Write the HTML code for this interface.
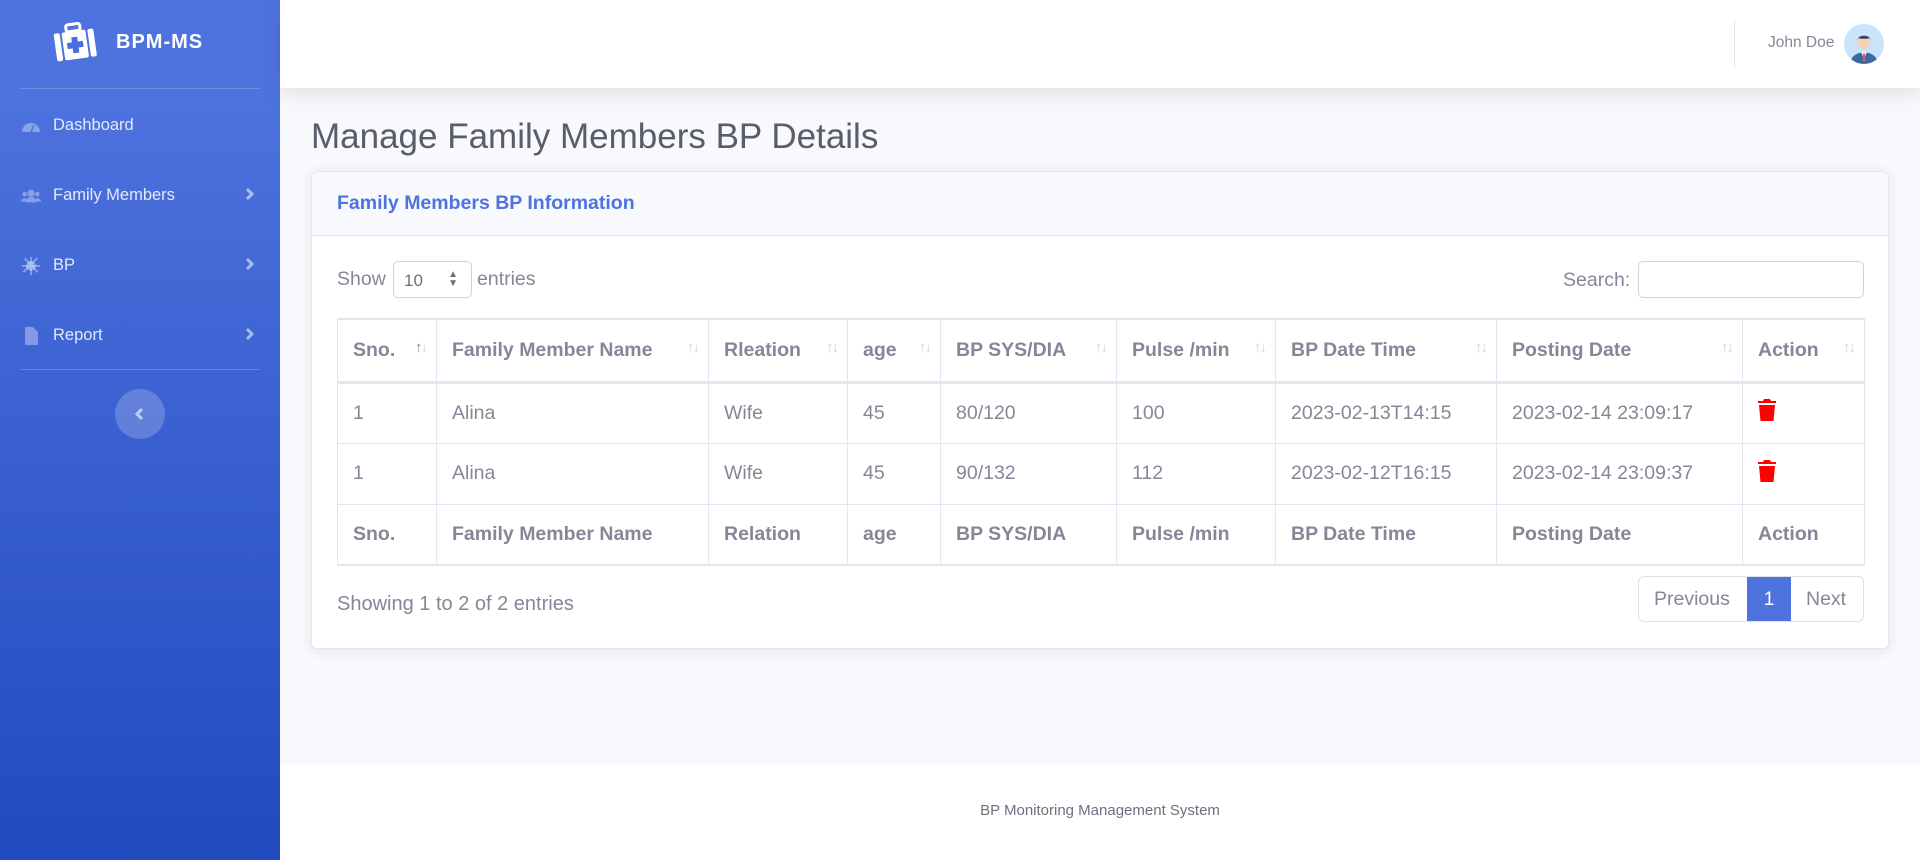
<!DOCTYPE html>
<html><head><meta charset="utf-8"><style>
*{box-sizing:border-box;margin:0;padding:0}
body{width:1920px;height:860px;overflow:hidden;background:#f8f9fc;font-family:"Liberation Sans",sans-serif;color:#858796;position:relative}
.sb{position:absolute;left:0;top:0;width:280px;height:860px;background:linear-gradient(180deg,#4e73df 10%,#224abe 100%)}
.brand{position:absolute;left:116px;top:31px;color:#fff;font-weight:bold;font-size:20px;letter-spacing:1px}
.hr{position:absolute;left:20px;width:240px;height:1px;background:rgba(255,255,255,.2)}
.item{position:absolute;left:21px;color:rgba(255,255,255,.85);font-size:16.5px;display:flex;align-items:center}
.item .ic{width:20px;height:18px;margin-right:12px;display:inline-block}
.chev{position:absolute;left:245px}
.tog{position:absolute;left:115px;top:389px;width:50px;height:50px;border-radius:50%;background:rgba(255,255,255,.2)}
.top{position:absolute;left:280px;top:0;width:1640px;height:88px;background:#fff;box-shadow:0 4px 20px rgba(58,59,69,.15)}
.vd{position:absolute;left:1454px;top:20px;width:1px;height:48px;background:#e3e6f0}
.jd{position:absolute;left:1488px;top:34px;font-size:15.5px;color:#858796}
.av{position:absolute;left:1564px;top:24px;width:40px;height:40px;border-radius:50%;background:#c9e3fb;overflow:hidden}
h1{position:absolute;left:311px;top:117px;font-weight:normal;font-size:35px;color:#5a5c69}
.card{position:absolute;left:311px;top:171px;width:1578px;height:478px;background:#fff;border:1px solid #e3e6f0;border-radius:6px;box-shadow:0 2px 12px rgba(58,59,69,.1)}
.ch{height:64px;background:#f8f9fc;border-bottom:1px solid #e3e6f0;border-radius:6px 6px 0 0;padding:20px 25px;color:#4e73df;font-weight:bold;font-size:19.5px}
.t{font-size:19.5px}
table{position:absolute;left:337px;top:318px;border-collapse:collapse;table-layout:fixed;width:1527px;font-size:19.5px}
td,th{border:1px solid #e3e6f0;padding:0 15px;text-align:left;white-space:nowrap;overflow:hidden}
th{font-weight:bold;color:#858796;position:relative}
thead th{height:63px;border-bottom:3px solid #e3e6f0;border-top:2px solid #e3e6f0}
tbody td{height:61px}
tfoot th{height:61px;border-bottom:2px solid #e3e6f0}
.ar{position:absolute;right:10px;top:19px;color:#d1d3e2;font-size:15px;font-weight:normal;letter-spacing:-2px}
.pg{position:absolute;left:1638px;top:576px;width:226px;height:46px;display:flex;border:1px solid #dddfeb;border-radius:6px;overflow:hidden;font-size:19.5px}
.pg div{padding:0 15px;line-height:44px}
.foot{position:absolute;left:280px;top:764px;width:1640px;height:96px;background:#fff;text-align:center;padding-top:38px;font-size:15px;color:#6e707e}
</style></head><body>
<div class="sb">
<svg style="position:absolute;left:53px;top:22px" width="44" height="42" viewBox="0 0 44 42"><g fill="#fff" transform="rotate(-8 22 21)"><rect x="15" y="2" width="14" height="7" rx="2" fill="none" stroke="#fff" stroke-width="3"/><rect x="2" y="9" width="6" height="28" rx="2"/><rect x="36" y="9" width="6" height="28" rx="2"/><rect x="10" y="9" width="24" height="28" rx="2"/><path d="M19 15h6v5h5v6h-5v5h-6v-5h-5v-6h5z" fill="#4a6ddb"/></g></svg>
<div class="brand">BPM-MS</div>
<div class="hr" style="top:88px"></div>
<div class="item" style="top:116px"><svg class="ic" viewBox="0 0 20 18"><path d="M1 15a9 9 0 0 1 18 0z" fill="rgba(255,255,255,.35)"/><path d="M10 15l3-7" stroke="#4e73df" stroke-width="1.5"/></svg>Dashboard</div>
<div class="item" style="top:186px"><svg class="ic" viewBox="0 0 22 18"><g fill="rgba(255,255,255,.35)"><circle cx="11" cy="6" r="4"/><circle cx="4" cy="7" r="2.5"/><circle cx="18" cy="7" r="2.5"/><path d="M5 16a6 6 0 0 1 12 0zM0 15a4 4 0 0 1 6-3l-1 3zM22 15a4 4 0 0 0-6-3l1 3z"/></g></svg>Family Members</div>
<svg class="chev" style="top:187px" width="10" height="14" viewBox="0 0 10 14"><path d="M2 2l5 5-5 5" fill="none" stroke="rgba(255,255,255,.55)" stroke-width="3"/></svg>
<div class="item" style="top:256px"><svg class="ic" viewBox="0 0 20 18"><g fill="rgba(255,255,255,.35)"><circle cx="10" cy="9" r="5"/><path d="M9 0h2v18H9zM1 8h18v2H1zM3 2l1.5-1.5 13 14L16 16zM17 2l-14 14-1.5-1.5 14-14z"/></g></svg>BP</div>
<svg class="chev" style="top:257px" width="10" height="14" viewBox="0 0 10 14"><path d="M2 2l5 5-5 5" fill="none" stroke="rgba(255,255,255,.55)" stroke-width="3"/></svg>
<div class="item" style="top:326px"><svg class="ic" viewBox="0 0 20 18"><path d="M4 0h8l5 5v13H4z" fill="rgba(255,255,255,.35)"/></svg>Report</div>
<svg class="chev" style="top:327px" width="10" height="14" viewBox="0 0 10 14"><path d="M2 2l5 5-5 5" fill="none" stroke="rgba(255,255,255,.55)" stroke-width="3"/></svg>
<div class="hr" style="top:369px"></div>
<div class="tog"><svg style="position:absolute;left:20px;top:18px" width="10" height="14" viewBox="0 0 10 14"><path d="M7 2L2 7l5 5" fill="none" stroke="rgba(255,255,255,.6)" stroke-width="3"/></svg></div>
</div>
<div class="top"><div class="vd"></div><div class="jd">John Doe</div>
<div class="av"><svg width="40" height="40" viewBox="0 0 40 40"><path d="M6 40c1-8 6-11 14-12 8 1 13 4 14 12z" fill="#3b6aa0"/><path d="M17 28h6l-3 6z" fill="#fff"/><path d="M19.3 29h1.4l.6 8h-2.6z" fill="#e05a5a"/><ellipse cx="20" cy="18" rx="6" ry="7" fill="#f6d2b8"/><path d="M13 17c0-7 14-7 14 0l-1-3c-3 1-9 1-12 0z" fill="#2d3e55"/></svg></div>
</div>
<h1>Manage Family Members BP Details</h1>
<div class="card"><div class="ch">Family Members BP Information</div></div>
<div class="t" style="position:absolute;left:337px;top:268px">Show</div>
<div style="position:absolute;left:393px;top:261px;width:79px;height:37px;border:1px solid #d1d3e2;border-radius:5px;font-size:17px;padding:9px 10px;color:#6e707e">10<span style="position:absolute;right:13px;top:8px;font-size:10px;line-height:9px">▲<br>▼</span></div>
<div class="t" style="position:absolute;left:477px;top:268px">entries</div>
<div class="t" style="position:absolute;left:1563px;top:269px">Search:</div>
<div style="position:absolute;left:1638px;top:261px;width:226px;height:37px;border:1px solid #d1d3e2;border-radius:5px"></div>
<table>
<colgroup><col style="width:99px"><col style="width:272px"><col style="width:139px"><col style="width:93px"><col style="width:176px"><col style="width:159px"><col style="width:221px"><col style="width:246px"><col style="width:122px"></colgroup>
<thead><tr><th>Sno.<span class="ar" style="color:#858796">↑<span style="color:#d1d3e2">↓</span></span></th><th>Family Member Name<span class="ar">↑↓</span></th><th>Rleation<span class="ar">↑↓</span></th><th>age<span class="ar">↑↓</span></th><th>BP SYS/DIA<span class="ar">↑↓</span></th><th>Pulse /min<span class="ar">↑↓</span></th><th>BP Date Time<span class="ar">↑↓</span></th><th>Posting Date<span class="ar">↑↓</span></th><th>Action<span class="ar">↑↓</span></th></tr></thead>
<tbody>
<tr><td>1</td><td>Alina</td><td>Wife</td><td>45</td><td>80/120</td><td>100</td><td>2023-02-13T14:15</td><td>2023-02-14 23:09:17</td><td><svg width="18" height="22" viewBox="0 0 18 22"><path d="M6 0h6l1 2h5v2H0V2h5zM1 6h16l-1.5 16h-13z" fill="#f00"/></svg></td></tr>
<tr><td>1</td><td>Alina</td><td>Wife</td><td>45</td><td>90/132</td><td>112</td><td>2023-02-12T16:15</td><td>2023-02-14 23:09:37</td><td><svg width="18" height="22" viewBox="0 0 18 22"><path d="M6 0h6l1 2h5v2H0V2h5zM1 6h16l-1.5 16h-13z" fill="#f00"/></svg></td></tr>
</tbody>
<tfoot><tr><th>Sno.</th><th>Family Member Name</th><th>Relation</th><th>age</th><th>BP SYS/DIA</th><th>Pulse /min</th><th>BP Date Time</th><th>Posting Date</th><th>Action</th></tr></tfoot>
</table>
<div class="t" style="position:absolute;left:337px;top:593px;font-size:20px">Showing 1 to 2 of 2 entries</div>
<div class="pg"><div style="width:108px">Previous</div><div style="width:44px;background:#4e73df;color:#fff;text-align:center;padding:0">1</div><div>Next</div></div>
<div class="foot">BP Monitoring Management System</div>
</body></html>
